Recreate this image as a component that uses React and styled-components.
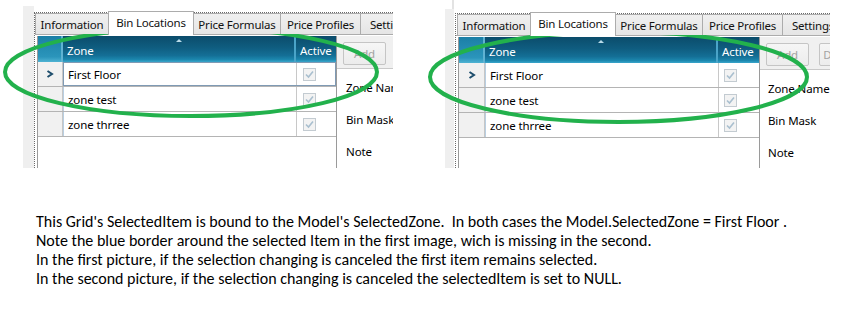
import React from "react";
import styled, { createGlobalStyle } from "styled-components";

const Global = createGlobalStyle`
  html, body { margin: 0; padding: 0; background: #ffffff; }
  body { width: 860px; height: 309px; overflow: hidden; }
  #root { width: 860px; height: 309px; }
`;

const UI_FONT = `"Noto Sans", "Open Sans", sans-serif`;

const Page = styled.div`
  position: relative;
  width: 860px;
  height: 309px;
  display: flex;
  flex-direction: column;
`;

const Shots = styled.div`
  display: flex;
  height: 168px;
`;

const Shot = styled.div`
  position: relative;
  display: flex;
  margin-left: ${(p) => p.$left}px;
  width: ${(p) => p.$width}px;
`;

const ShotClip = styled.div`
  display: flex;
  flex: 1;
  overflow: hidden;
`;

const Strip = styled.div`
  display: flex;
  flex-direction: column;
  width: ${(p) => p.$width}px;
  margin-right: ${(p) => p.$gap}px;
  flex-shrink: 0;
`;

const StripStem = styled.div`
  align-self: flex-end;
  width: 2px;
  height: ${(p) => p.$h}px;
  background: #e3e3e3;
`;

const StripBody = styled.div`
  flex: 1;
  margin-top: ${(p) => p.$top}px;
  background: #efefef;
`;

const Frame = styled.div`
  flex: 1;
  display: flex;
  flex-direction: column;
  margin-top: ${(p) => p.$top}px;
  border-top: 1px dotted #6a6a6a;
  border-left: 1px dotted #6a6a6a;
  min-width: 0;
`;

const TabStrip = styled.div`
  display: flex;
  align-items: flex-end;
  height: 21px;
  padding-left: ${(p) => p.$pad}px;
  position: relative;
  z-index: 2;
`;

const Tab = styled.div`
  flex-shrink: 0;
  box-sizing: border-box;
  width: ${(p) => p.$w}px;
  height: ${(p) => (p.$active ? 24 : 21)}px;
  margin-bottom: ${(p) => (p.$active ? -1 : 0)}px;
  border: 1px solid #acacac;
  border-bottom: none;
  margin-right: -1px;
  background: ${(p) =>
    p.$active ? "#ffffff" : "linear-gradient(#f0f0f0, #e5e5e5)"};
  font-family: ${UI_FONT};
  font-size: 11.5px;
  letter-spacing: -0.2px;
  color: #111;
  display: flex;
  align-items: center;
  justify-content: center;
  padding-bottom: ${(p) => (p.$active ? 3 : 0)}px;
  white-space: nowrap;
  overflow: hidden;
`;

const Content = styled.div`
  flex: 1;
  display: flex;
  border-top: 1px solid #acacac;
  padding: 1px 0 0 2px;
  background: #ffffff;
`;

const Grid = styled.div`
  display: flex;
  flex-direction: column;
  width: ${(p) => p.$w}px;
  flex-shrink: 0;
  border-left: 1px solid #9a9a9a;
  border-right: 1px solid #9a9a9a;
  font-family: ${UI_FONT};
  font-size: 11.5px;
  letter-spacing: -0.1px;
`;

const HeaderRow = styled.div`
  display: flex;
  height: 26px;
  background: linear-gradient(
    #0b4c6b 0%,
    #0f5d80 45%,
    #146f96 75%,
    #1b86ad 90%,
    #3aa6cb 100%
  );
`;

const CornerCell = styled.div`
  box-sizing: border-box;
  width: ${(p) => p.$w}px;
  background: linear-gradient(#1b7fa6, #2b95bb 80%, #4fb3d3);
  border-right: 2px solid #5fb2d2;
`;

const HeadCell = styled.div`
  position: relative;
  box-sizing: border-box;
  width: ${(p) => p.$w}px;
  flex-shrink: 0;
  color: #ffffff;
  display: flex;
  align-items: center;
  padding: 3px 0 0 ${(p) => p.$pad}px;
  border-right: ${(p) => (p.$sep ? "2px solid #4aa4c8" : "none")};
  overflow: hidden;
  white-space: nowrap;
`;

const SortGlyph = styled.span`
  position: absolute;
  top: 3px;
  left: 50%;
  margin-left: -3px;
  width: 0;
  height: 0;
  border-left: 3px solid transparent;
  border-right: 3px solid transparent;
  border-bottom: 3px solid #b9dbe9;
`;

const Row = styled.div`
  display: flex;
  height: 25px;
  box-sizing: border-box;
  border-bottom: 1px solid #b4b4b4;
`;

const RowHead = styled.div`
  box-sizing: border-box;
  width: ${(p) => p.$w}px;
  flex-shrink: 0;
  background: #f1f1f1;
  border-right: 1px solid #c6c6c6;
  display: flex;
  align-items: center;
  justify-content: center;
`;

const RowCells = styled.div`
  display: flex;
  flex: 1;
  box-sizing: border-box;
  border-left: 1px solid #b9cfe2;
  outline: ${(p) => (p.$selected ? "1px solid #7f9ab4" : "none")};
  outline-offset: -1px;
`;

const ZoneCell = styled.div`
  box-sizing: border-box;
  width: ${(p) => p.$w}px;
  flex-shrink: 0;
  display: flex;
  align-items: center;
  padding-left: 4px;
  color: #000;
  border-right: 1px solid #c8c8c8;
`;

const ActiveCell = styled.div`
  flex: 1;
  display: flex;
  align-items: center;
  padding-left: ${(p) => p.$pad}px;
`;

const CheckBox = styled.span`
  box-sizing: border-box;
  width: 13px;
  height: 13px;
  border: 1px solid #c3cbd1;
  background: #f3f3f3;
  display: flex;
  align-items: center;
  justify-content: center;
`;

const GridFill = styled.div`
  flex: 1;
  background: #ffffff;
`;

const Panel = styled.div`
  flex: 1;
  display: flex;
  flex-direction: column;
  min-width: 0;
  font-family: ${UI_FONT};
  font-size: 11.5px;
  letter-spacing: -0.1px;
`;

const Toolbar = styled.div`
  display: flex;
  align-items: center;
  gap: 10px;
  height: 33px;
  padding-left: 6px;
  padding-top: 2px;
  background: #f0f0f0;
  border-bottom: 1px solid #c9c9c9;
  box-sizing: border-box;
`;

const ToolButton = styled.div`
  flex-shrink: 0;
  box-sizing: border-box;
  width: 43px;
  height: 23px;
  border: 1px solid #c5c5c5;
  border-radius: 2px;
  background: linear-gradient(#f6f6f6, #ececec);
  color: #a3a3a3;
  display: flex;
  align-items: center;
  justify-content: center;
`;

const Form = styled.div`
  display: flex;
  flex-direction: column;
  padding: 2px 0 0 ${(p) => p.$pad}px;
`;

const FieldLabel = styled.div`
  height: 32px;
  display: flex;
  align-items: center;
  color: #000;
  white-space: nowrap;
`;

const Annotation = styled.svg`
  position: absolute;
  left: 0;
  top: 0;
  width: 860px;
  height: 170px;
  pointer-events: none;
  overflow: visible;
`;

const Caption = styled.div`
  margin-top: 44px;
  padding-left: 36px;
  font-family: "Carlito", "Liberation Sans", Arial, sans-serif;
  font-size: 16px;
  line-height: 19px;
  letter-spacing: 0px;
  color: #000;
  white-space: pre;
`;

const Chevron = () => (
  <svg width="8" height="8" viewBox="0 0 8 8">
    <path d="M1.5 1 L6 4 L1.5 7" fill="none" stroke="#1d4d6c" strokeWidth="2" />
  </svg>
);

const Check = () => (
  <svg width="9" height="9" viewBox="0 0 9 9">
    <path d="M1 4.5 L3.5 7 L8 1.5" fill="none" stroke="#a9bfcf" strokeWidth="1.6" />
  </svg>
);

const zones = ["First Floor", "zone test", "zone thrree"];
const tabs = [
  { label: "Information", w: 74 },
  { label: "Bin Locations", w: 86, active: true },
  { label: "Price Formulas", w: 88 },
  { label: "Price Profiles", w: 81 },
  { label: "Settings", w: 62 },
];

function Screenshot({ cfg }) {
  return (
    <Shot $left={cfg.left} $width={cfg.width}>
      <ShotClip>
        <Strip $width={cfg.stripW} $gap={cfg.stripGap}>
          {cfg.stem ? <StripStem $h={cfg.stripTop} /> : null}
          <StripBody $top={cfg.stem ? 0 : cfg.stripTop} />
        </Strip>
        <Frame $top={cfg.frameTop}>
          <TabStrip $pad={cfg.tabPad}>
            {tabs.map((t) => (
              <Tab key={t.label} $w={t.w} $active={t.active}>
                {t.label}
              </Tab>
            ))}
          </TabStrip>
          <Content>
            <Grid $w={cfg.cols[0] + cfg.cols[1] + cfg.cols[2] + 2}>
              <HeaderRow>
                <CornerCell $w={cfg.cols[0]} />
                <HeadCell $w={cfg.cols[1]} $pad={4} $sep>
                  <SortGlyph />
                  Zone
                </HeadCell>
                <HeadCell $w={cfg.cols[2]} $pad={4}>
                  Active
                </HeadCell>
              </HeaderRow>
              {zones.map((z, i) => (
                <Row key={z}>
                  <RowHead $w={cfg.cols[0]}>{i === 0 ? <Chevron /> : null}</RowHead>
                  <RowCells $selected={cfg.selectedBorder && i === 0}>
                    <ZoneCell $w={cfg.cols[1]}>{z}</ZoneCell>
                    <ActiveCell $pad={cfg.checkPad}>
                      <CheckBox>
                        <Check />
                      </CheckBox>
                    </ActiveCell>
                  </RowCells>
                </Row>
              ))}
              <GridFill />
            </Grid>
            <Panel>
              <Toolbar>
                <ToolButton>Add</ToolButton>
                <ToolButton>Delete</ToolButton>
              </Toolbar>
              <Form $pad={cfg.labelPad}>
                <FieldLabel>Zone Name</FieldLabel>
                <FieldLabel>Bin Mask</FieldLabel>
                <FieldLabel>Note</FieldLabel>
              </Form>
            </Panel>
          </Content>
        </Frame>
      </ShotClip>
    </Shot>
  );
}

const leftCfg = {
  left: 23,
  width: 370,
  stripW: 11,
  stripGap: 0,
  stripTop: 6,
  stem: false,
  frameTop: 12,
  tabPad: 0,
  cols: [25, 233, 38],
  checkPad: 6,
  labelPad: 9,
  selectedBorder: true,
};

const rightCfg = {
  left: 52,
  width: 385,
  stripW: 9,
  stripGap: 1,
  stripTop: 9,
  stem: true,
  frameTop: 13,
  tabPad: 1,
  cols: [26, 233, 39],
  checkPad: 5,
  labelPad: 8,
  selectedBorder: false,
};

export default function App() {
  return (
    <Page>
      <Global />
      <Shots>
        <Screenshot cfg={leftCfg} />
        <Screenshot cfg={rightCfg} />
      </Shots>
      <Caption>
        {"This Grid's SelectedItem is bound to the Model's SelectedZone.  In both cases the Model.SelectedZone = First Floor .\n" +
          "Note the blue border around the selected Item in the first image, wich is missing in the second.\n" +
          "In the first picture, if the selection changing is canceled the first item remains selected.\n" +
          "In the second picture, if the selection changing is canceled the selectedItem is set to NULL."}
      </Caption>
      <Annotation viewBox="0 0 860 170">
        <ellipse cx="191" cy="72" rx="186" ry="44" fill="none" stroke="#22b14c" strokeWidth="4" />
        <ellipse cx="618.5" cy="77" rx="188.5" ry="45" fill="none" stroke="#22b14c" strokeWidth="4" />
      </Annotation>
    </Page>
  );
}
